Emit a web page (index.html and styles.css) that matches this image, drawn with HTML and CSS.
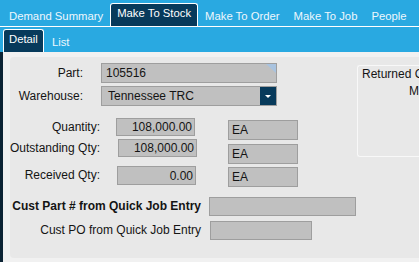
FILE: index.html
```html
<!DOCTYPE html>
<html lang="en">
<head>
  <meta charset="UTF-8" />
  <title>Make To Stock</title>
  <link rel="stylesheet" href="styles.css">
</head>
<body>
  <div class="tabbar">
    <span class="tab">Demand Summary</span>
    <span class="tab active">Make To Stock</span>
    <span class="tab">Make To Order</span>
    <span class="tab">Make To Job</span>
    <span class="tab">People</span>
  </div>
  <div class="subbar">
    <span class="tab active">Detail</span>
    <span class="tab">List</span>
  </div>

  <div class="page">
    <div class="strip"></div>
    <div class="panel">
      <div class="upper">
        <div class="fields">
          <div class="row row-part">
            <label class="lbl">Part:</label>
            <div class="box part-box">105516</div>
          </div>
          <div class="row row-wh">
            <label class="lbl">Warehouse:</label>
            <div class="box select-box">
              <span class="select-text">Tennessee TRC</span>
              <span class="drop"><i class="arrow"></i></span>
            </div>
          </div>

          <div class="row qty-row row-qty">
            <label class="lbl">Quantity:</label>
            <div class="box num">108,000.00</div>
            <div class="box uom">EA</div>
          </div>
          <div class="row qty-row row-out">
            <label class="lbl">Outstanding Qty:</label>
            <div class="box num">108,000.00</div>
            <div class="box uom">EA</div>
          </div>
          <div class="row qty-row row-rec">
            <label class="lbl">Received Qty:</label>
            <div class="box num">0.00</div>
            <div class="box uom">EA</div>
          </div>
        </div>

        <div class="group">
          <div class="group-title">Returned Goods</div>
          <div class="group-line">Material:</div>
        </div>
      </div>

      <div class="row cust-row row-custpart">
        <label class="lbl bold">Cust Part # from Quick Job Entry</label>
        <div class="box"></div>
      </div>
      <div class="row cust-row row-custpo">
        <label class="lbl">Cust PO from Quick Job Entry</label>
        <div class="box"></div>
      </div>
    </div>
  </div>
</body>
</html>
```

FILE: styles.css
```css
body {
  margin: 0;
  width: 419px;
  height: 262px;
  overflow: hidden;
  font-family: "Liberation Sans", Arial, sans-serif;
  font-size: 12px;
  color: #141414;
  background-color: #f1f1f1;
}

/* tab strips */
.tabbar,
.subbar {
  display: flex;
  align-items: flex-end;
  background-color: #29a9e1;
}
.tabbar {
  height: 26px;
  padding-left: 2px;
  border-bottom: 1px solid #fff;
}
.subbar {
  height: 25px;
  padding-left: 3px;
}
.tab {
  box-sizing: border-box;
  height: 23px;
  padding: 3px 6px 0;
  line-height: 19px;
  border: 1px solid transparent;
  border-bottom: 0;
  font-size: 11.3px;
  color: #eef7fd;
  white-space: nowrap;
}
.subbar .tab {
  padding-left: 5px;
  padding-right: 5px;
}
.subbar .tab + .tab {
  margin-left: 2px;
}
.tab.active {
  padding-top: 0;
  background-color: #073a5b;
  border-color: #fff;
  border-radius: 3px 3px 0 0;
  color: #fff;
}

/* body */
.page {
  display: flex;
  height: 210px;
}
.strip {
  width: 3px;
  flex: none;
  background-color: #0c2435;
}
.panel {
  flex: 1;
  box-sizing: border-box;
  margin: 5px 0 4px 7px;
  padding-top: 6px;
  background-color: #e8e8e8;
  border-radius: 4px 0 0 4px;
  overflow: hidden;
}
.upper {
  display: flex;
  align-items: flex-start;
}
.fields {
  width: 347px;
  flex: none;
}

.row {
  display: flex;
  align-items: flex-start;
}
.lbl {
  flex: none;
  text-align: right;
  white-space: nowrap;
  line-height: 20px;
}
.bold {
  font-weight: bold;
}
.box {
  box-sizing: border-box;
  display: flex;
  align-items: center;
  flex: none;
  height: 20px;
  padding: 0 4px;
  background-color: #c0c0c0;
  border: 1px solid #9e9e9e;
  white-space: nowrap;
  overflow: hidden;
  position: relative;
}

/* part / warehouse */
.row-part .lbl,
.row-wh .lbl {
  width: 73px;
  margin-right: 18px;
}
.part-box,
.select-box {
  width: 176px;
}
.part-box::after {
  content: "";
  position: absolute;
  top: 0;
  right: 0;
  border-top: 9px solid #a9c3df;
  border-left: 10px solid transparent;
}
.row-wh {
  margin-top: 3px;
}
.select-box {
  padding: 0 0 0 6px;
  align-items: stretch;
}
.select-text {
  flex: 1;
  display: flex;
  align-items: center;
}
.drop {
  width: 16px;
  background-color: #073a5b;
  display: flex;
  align-items: center;
  justify-content: center;
}
.arrow {
  border-left: 3px solid transparent;
  border-right: 3px solid transparent;
  border-top: 3px solid #fff;
  margin-top: 1px;
}

/* quantities */
.qty-row .lbl {
  width: 90px;
  line-height: 18px;
}
.num {
  width: 79px;
  height: 18px;
  justify-content: flex-end;
  padding-right: 2px;
}
.uom {
  width: 70px;
  padding-left: 3px;
}
.row-qty {
  margin-top: 12px;
  height: 21px;
}
.row-qty .num { margin-left: 16px; }
.row-qty .uom { margin-left: 33px; margin-top: 2px; }

.row-out {
  height: 27px;
}
.row-out .num { margin-left: 18px; }
.row-out .uom { margin-left: 31px; margin-top: 5px; }

.row-rec {
  height: 21px;
}
.row-rec .lbl { line-height: 19px; }
.row-rec .num { margin-left: 17px; height: 19px; }
.row-rec .uom { margin-left: 32px; margin-top: 1px; }

/* returned goods group */
.group {
  box-sizing: border-box;
  flex: none;
  width: 200px;
  height: 92px;
  margin-top: 2px;
  border: 1px solid #f8f8f8;
  border-right: 0;
  border-radius: 3px 0 0 3px;
  white-space: nowrap;
}
.group-title {
  padding: 1px 0 0 4px;
  line-height: 14px;
}
.group-line {
  margin-top: 3px;
  padding-left: 51px;
  line-height: 14px;
}

/* quick job entry */
.cust-row .lbl {
  width: 191px;
  line-height: 19px;
}
.cust-row .box {
  height: 19px;
}
.row-custpart {
  margin-top: 10px;
}
.row-custpart .box {
  margin-left: 8px;
  width: 147px;
}
.row-custpo {
  margin-top: 5px;
}
.row-custpo .box {
  margin-left: 9px;
  width: 102px;
}
```
